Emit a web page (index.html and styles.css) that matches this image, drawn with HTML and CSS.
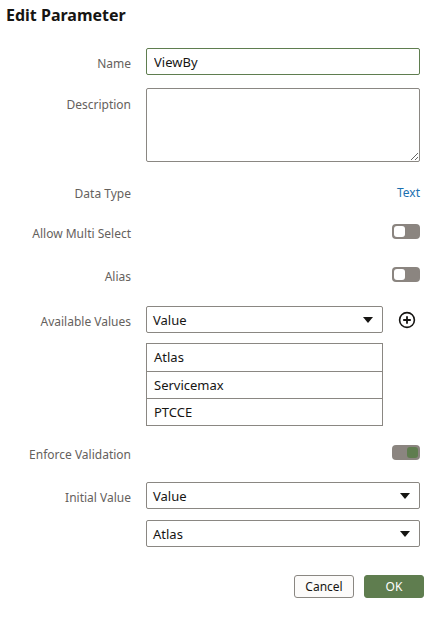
FILE: index.html
```html
<html>
  <head>
    <link rel="stylesheet" href="styles.css">
  </head>
  <body>
    <div class="dialog">
      <h1 class="title">Edit Parameter</h1>

      <div class="form">
        <div class="row row-name">
          <label class="label">Name</label>
          <div class="field"><input class="input input-focus" type="text" value="ViewBy"></div>
        </div>

        <div class="row row-desc">
          <label class="label label-top">Description</label>
          <div class="field"><textarea class="input textarea"></textarea></div>
        </div>

        <div class="row row-type">
          <label class="label">Data Type</label>
          <div class="field field-end"><span class="value-link">Text</span></div>
        </div>

        <div class="row row-multi">
          <label class="label">Allow Multi Select</label>
          <div class="field field-end"><span class="toggle"><span class="knob"></span></span></div>
        </div>

        <div class="row row-alias">
          <label class="label">Alias</label>
          <div class="field field-end"><span class="toggle"><span class="knob"></span></span></div>
        </div>

        <div class="row row-avail">
          <label class="label">Available Values</label>
          <div class="field field-add">
            <div class="select"><span>Value</span><span class="caret"></span></div>
            <svg class="add-icon" width="18" height="18" viewBox="0 0 18 18">
              <circle cx="9" cy="9" r="7.4" fill="none" stroke="#161513" stroke-width="1.6"/>
              <path d="M9 5.2v7.6M5.2 9h7.6" stroke="#161513" stroke-width="1.8"/>
            </svg>
          </div>
        </div>

        <div class="row row-list">
          <span class="label"></span>
          <div class="field field-add">
            <ul class="value-list">
              <li>Atlas</li>
              <li>Servicemax</li>
              <li>PTCCE</li>
            </ul>
            <span class="add-space"></span>
          </div>
        </div>

        <div class="row row-enforce">
          <label class="label">Enforce Validation</label>
          <div class="field field-end"><span class="toggle toggle-on"><span class="knob"></span></span></div>
        </div>

        <div class="row row-initial">
          <label class="label">Initial Value</label>
          <div class="field"><div class="select"><span>Value</span><span class="caret"></span></div></div>
        </div>

        <div class="row row-atlas">
          <span class="label"></span>
          <div class="field"><div class="select"><span>Atlas</span><span class="caret"></span></div></div>
        </div>
      </div>

      <div class="actions">
        <button class="btn btn-cancel">Cancel</button>
        <button class="btn btn-ok">OK</button>
      </div>
    </div>
  </body>
</html>
```

FILE: styles.css
```css
body {
  margin: 0;
  background: #ffffff;
  font-family: "Noto Sans", "Open Sans", sans-serif;
  color: #161513;
}
.dialog {
  width: 442px;
}
.title {
  margin: 0;
  padding: 4px 0 0 6px;
  font-size: 16px;
  font-weight: 700;
  line-height: 22px;
  color: #161513;
}
.form {
  padding: 22px 22px 0 0;
  display: flex;
  flex-direction: column;
}
.row {
  display: grid;
  grid-template-columns: 131px 1fr;
  column-gap: 15px;
  min-height: 27px;
  align-items: center;
}
.row-desc { margin-top: 13px; align-items: start; }
.row-type { margin-top: 16px; }
.row-multi { margin-top: 13px; }
.row-alias { margin-top: 16px; }
.row-avail { margin-top: 18px; }
.row-list { margin-top: 10px; }
.row-enforce { margin-top: 13px; }
.row-initial { margin-top: 16px; }
.row-atlas { margin-top: 11px; }

.label {
  text-align: right;
  font-size: 12px;
  color: #65615d;
  padding-top: 3px;
}
.label-top {
  padding-top: 8px;
}
.field {
  display: flex;
  align-items: center;
}
.field-end {
  justify-content: flex-end;
}
.field-add {
  gap: 15px;
  padding-right: 4px;
}
.input {
  width: 100%;
  height: 27px;
  box-sizing: border-box;
  border: 1px solid #8a8782;
  border-radius: 2px;
  padding: 1px 7px 0;
  font-family: inherit;
  font-size: 13px;
  color: #161513;
  outline: none;
}
.input-focus {
  border-color: #5f7d4f;
}
.textarea {
  height: 74px;
  resize: vertical;
  display: block;
}
.value-link {
  font-size: 12px;
  color: #1a6fb0;
  padding-top: 2px;
}
.toggle {
  width: 28px;
  height: 15px;
  border-radius: 4px;
  background: #8b8580;
  display: flex;
  align-items: center;
  padding: 0 2px;
  box-sizing: border-box;
}
.knob {
  width: 11px;
  height: 11px;
  border-radius: 3px;
  background: #ffffff;
}
.toggle-on {
  justify-content: flex-end;
}
.toggle-on .knob {
  background: #5f7d4f;
}
.select {
  flex: 1;
  height: 27px;
  box-sizing: border-box;
  border: 1px solid #8a8782;
  border-radius: 2px;
  padding: 1px 9px 0 6px;
  display: flex;
  align-items: center;
  justify-content: space-between;
  font-size: 13px;
}
.caret {
  width: 0;
  height: 0;
  border-left: 5px solid transparent;
  border-right: 5px solid transparent;
  border-top: 6px solid #161513;
}
.add-icon {
  flex: none;
}
.add-space {
  width: 18px;
  flex: none;
}
.value-list {
  flex: 1;
  margin: 0;
  padding: 0;
  list-style: none;
  border: 1px solid #8a8782;
}
.value-list li {
  height: 27px;
  box-sizing: border-box;
  line-height: 26px;
  padding: 0 7px;
  font-size: 13px;
  border-top: 1px solid #8a8782;
}
.value-list li:first-child {
  border-top: none;
  line-height: 27px;
}
.actions {
  display: flex;
  justify-content: flex-end;
  gap: 10px;
  padding: 28px 18px 0 0;
}
.btn {
  width: 60px;
  height: 23px;
  border-radius: 3px;
  font-family: inherit;
  font-size: 12px;
  padding: 0;
}
.btn-cancel {
  background: #fcfbfa;
  border: 1px solid #8a8782;
  color: #161513;
}
.btn-ok {
  background: #5f7d4f;
  border: 1px solid #5f7d4f;
  color: #ffffff;
}
```
